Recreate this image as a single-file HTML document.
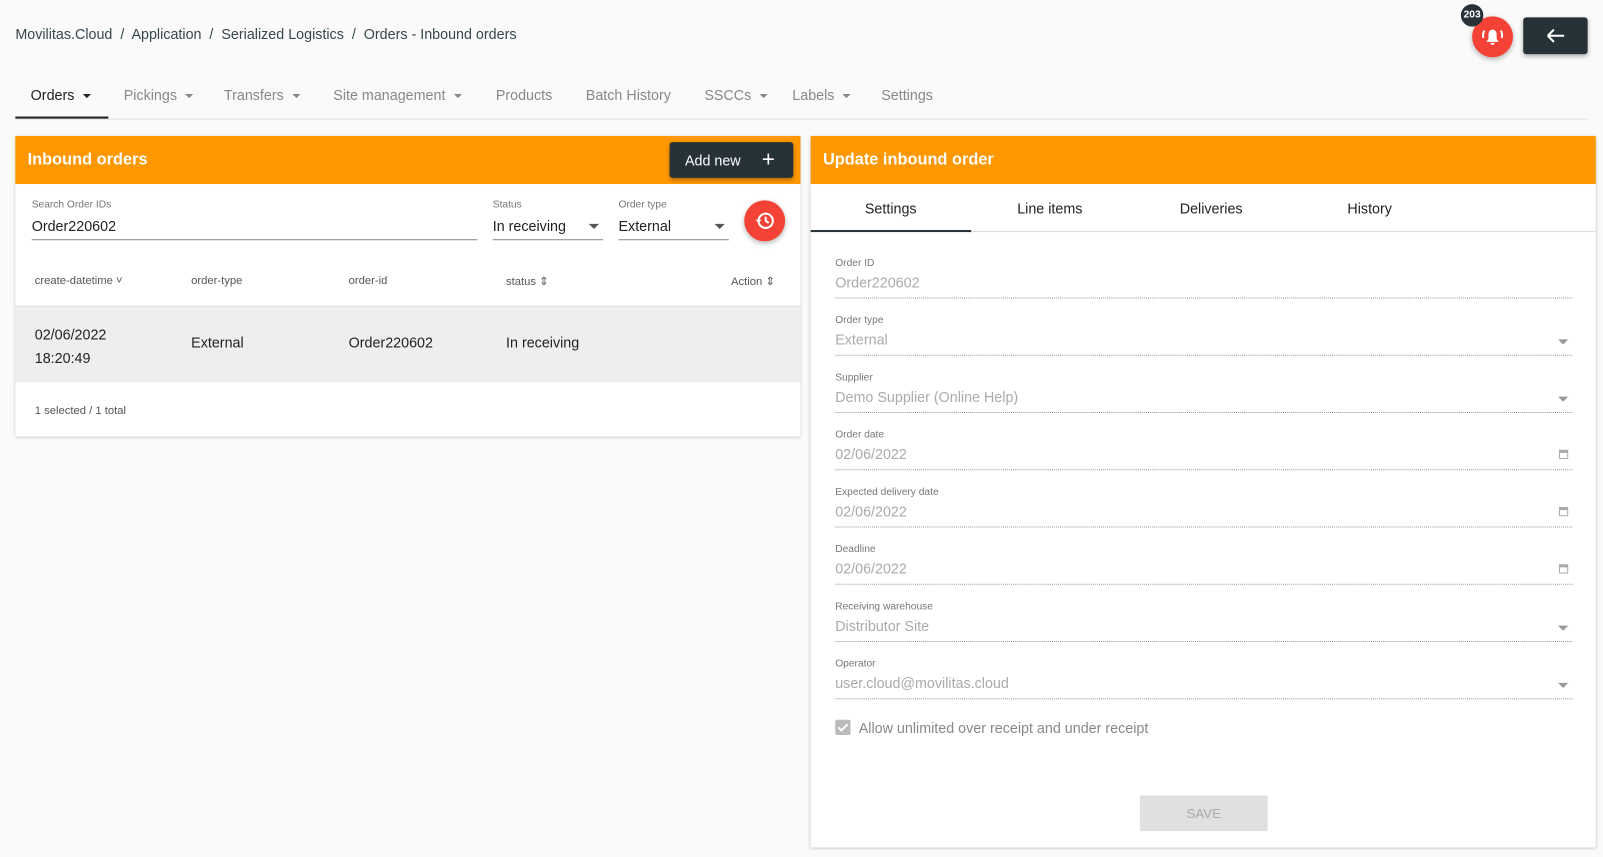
<!DOCTYPE html>
<html><head><style>
*{box-sizing:border-box;margin:0;padding:0}
html,body{width:1603px;height:857px;overflow:hidden;background:#fafafa}
#w{width:1568px;height:838px;transform:scale(1.0223);transform-origin:0 0;font-family:"Liberation Sans",sans-serif;color:#333;position:relative}
.abs{position:absolute}
.crumb{left:15px;top:25px;font-size:14px;color:#37474f}
.tabs{left:15px;top:76px;width:1538px;height:41px;border-bottom:1px solid #ddd}
.tab{position:absolute;top:9px;font-size:14px;color:#888}
.car{display:inline-block;width:0;height:0;border-left:4px solid transparent;border-right:4px solid transparent;border-top:4px solid #888;vertical-align:middle;margin-left:8px}
.card{background:#fff;box-shadow:0 1px 3px rgba(0,0,0,.25)}
.hdr{background:#ff9800;color:#fff;font-weight:bold;font-size:16px;height:47px;padding:15px 12px}
.lbl{font-size:10px;color:#777}
.val{font-size:14px;color:#222}
.fld{position:absolute;left:24px;width:721px}
.fld .l{font-size:10px;color:#777}
.fld .v{font-size:14px;color:#aaa;margin-top:5px;padding-bottom:4px;border-bottom:1px dotted #999;position:relative;height:24px}
.dd{position:absolute;right:4px;top:8px;border-left:5px solid transparent;border-right:5px solid transparent;border-top:5px solid #999}
.cal{position:absolute;right:4px;top:4px;width:9px;height:9px;border:1.5px solid #aaa;border-top-width:3px}
</style></head><body><div id="w">
<div class="abs crumb">Movilitas.Cloud &nbsp;/&nbsp; Application &nbsp;/&nbsp; Serialized Logistics &nbsp;/&nbsp; Orders - Inbound orders</div>
<div class="abs" style="left:1440px;top:16px;width:40px;height:40px;border-radius:50%;background:#f44336;box-shadow:0 2px 5px rgba(0,0,0,.3)">
<svg width="40" height="40" viewBox="0 0 40 40"><path d="M14 25h12l-2-3v-5a4 4 0 0 0-8 0v5z M18 26a2 2 0 0 0 4 0z" fill="#fff"/><path d="M12 14q-2 3-1 7M28 14q2 3 1 7" stroke="#fff" stroke-width="2" fill="none"/></svg></div>
<div class="abs" style="left:1429px;top:4px;width:22px;height:22px;border-radius:50%;background:#263238;color:#fff;font-size:10px;font-weight:bold;text-align:center;line-height:22px">203</div>
<div class="abs" style="left:1490px;top:17px;width:63px;height:36px;border-radius:3px;background:#263238;box-shadow:0 2px 4px rgba(0,0,0,.3)">
<svg width="63" height="36"><path d="M24 18h16M24 18l6-6M24 18l6 6" stroke="#fff" stroke-width="2" fill="none"/></svg></div>
<div class="abs tabs">
<div class="tab" style="left:15px;color:#222">Orders<span class="car" style="border-top-color:#222"></span></div>
<div style="position:absolute;left:0;top:38px;width:91px;height:2px;background:#222"></div>
<div class="tab" style="left:106px">Pickings<span class="car"></span></div>
<div class="tab" style="left:204px">Transfers<span class="car"></span></div>
<div class="tab" style="left:311px">Site management<span class="car"></span></div>
<div class="tab" style="left:470px">Products</div>
<div class="tab" style="left:558px">Batch History</div>
<div class="tab" style="left:674px">SSCCs<span class="car"></span></div>
<div class="tab" style="left:760px">Labels<span class="car"></span></div>
<div class="tab" style="left:847px">Settings</div>
</div>

<div class="abs card" style="left:15px;top:133px;width:768px;height:294px">
<div class="hdr">Inbound orders</div>
<div class="abs" style="left:640px;top:6px;width:121px;height:35px;background:#263238;border-radius:3px;color:#fff;font-size:14px;padding:10px 15px;box-shadow:0 2px 4px rgba(0,0,0,.3)">Add new <span style="font-size:22px;position:absolute;right:18px;top:4px">+</span></div>
<div class="abs lbl" style="left:16px;top:62px">Search Order IDs</div>
<div class="abs val" style="left:16px;top:80px;width:436px;border-bottom:1px solid #888;height:22px">Order220602</div>
<div class="abs lbl" style="left:467px;top:62px">Status</div>
<div class="abs val" style="left:467px;top:80px;width:108px;border-bottom:1px solid #888;height:22px">In receiving<span class="dd" style="border-top-color:#555;top:6px"></span></div>
<div class="abs lbl" style="left:590px;top:62px">Order type</div>
<div class="abs val" style="left:590px;top:80px;width:108px;border-bottom:1px solid #888;height:22px">External<span class="dd" style="border-top-color:#555;top:6px"></span></div>
<div class="abs" style="left:713px;top:63px;width:40px;height:40px;border-radius:50%;background:#f44336;box-shadow:0 2px 5px rgba(0,0,0,.3)"><svg width="40" height="40"><circle cx="21" cy="20" r="7" stroke="#fff" stroke-width="2" fill="none"/><path d="M21 16v4l3 2" stroke="#fff" stroke-width="2" fill="none"/><path d="M11 19l3 3 3-3z" fill="#fff"/></svg></div>
<div class="abs" style="left:19px;top:136px;font-size:11px;color:#555">create-datetime ˅</div>
<div class="abs" style="left:172px;top:136px;font-size:11px;color:#555">order-type</div>
<div class="abs" style="left:326px;top:136px;font-size:11px;color:#555">order-id</div>
<div class="abs" style="left:480px;top:136px;font-size:11px;color:#555">status ⇕</div>
<div class="abs" style="left:700px;top:136px;font-size:11px;color:#555">Action ⇕</div>
<div class="abs" style="left:0;top:166px;width:768px;height:75px;background:#eee;border-top:1px solid #ddd;font-size:14px;color:#222">
<div class="abs" style="left:19px;top:16px;line-height:23px">02/06/2022<br>18:20:49</div>
<div class="abs" style="left:172px;top:27px">External</div>
<div class="abs" style="left:326px;top:27px">Order220602</div>
<div class="abs" style="left:480px;top:27px">In receiving</div>
</div>
<div class="abs" style="left:19px;top:263px;font-size:11px;color:#555">1 selected / 1 total</div>
</div>

<div class="abs card" style="left:793px;top:133px;width:768px;height:696px">
<div class="hdr">Update inbound order</div>
<div style="height:47px;border-bottom:1px solid #ddd;position:relative;font-size:14px;color:#222">
<div class="abs" style="left:53px;top:16px">Settings</div>
<div class="abs" style="left:0;top:45px;width:157px;height:2px;background:#263238"></div>
<div class="abs" style="left:202px;top:16px">Line items</div>
<div class="abs" style="left:361px;top:16px">Deliveries</div>
<div class="abs" style="left:525px;top:16px">History</div>
</div>
<div class="fld" style="top:119px"><div class="l">Order ID</div><div class="v">Order220602</div></div>
<div class="fld" style="top:175px"><div class="l">Order type</div><div class="v">External<span class="dd"></span></div></div>
<div class="fld" style="top:231px"><div class="l">Supplier</div><div class="v">Demo Supplier (Online Help)<span class="dd"></span></div></div>
<div class="fld" style="top:287px"><div class="l">Order date</div><div class="v">02/06/2022<span class="cal"></span></div></div>
<div class="fld" style="top:343px"><div class="l">Expected delivery date</div><div class="v">02/06/2022<span class="cal"></span></div></div>
<div class="fld" style="top:399px"><div class="l">Deadline</div><div class="v">02/06/2022<span class="cal"></span></div></div>
<div class="fld" style="top:455px"><div class="l">Receiving warehouse</div><div class="v">Distributor Site<span class="dd"></span></div></div>
<div class="fld" style="top:511px"><div class="l">Operator</div><div class="v">user.cloud@movilitas.cloud<span class="dd"></span></div></div>
<div class="abs" style="left:24px;top:571px;width:15px;height:15px;background:#bbb;border-radius:2px"><svg width="15" height="15"><path d="M3 7.5l3 3 6-6" stroke="#fff" stroke-width="1.8" fill="none"/></svg></div>
<div class="abs" style="left:47px;top:571px;font-size:14px;color:#888">Allow unlimited over receipt and under receipt</div>
<div class="abs" style="left:322px;top:645px;width:125px;height:35px;background:#e0e0e0;border-radius:2px;color:#aaa;font-size:13px;text-align:center;line-height:35px">SAVE</div>
</div>
</div></body></html>
